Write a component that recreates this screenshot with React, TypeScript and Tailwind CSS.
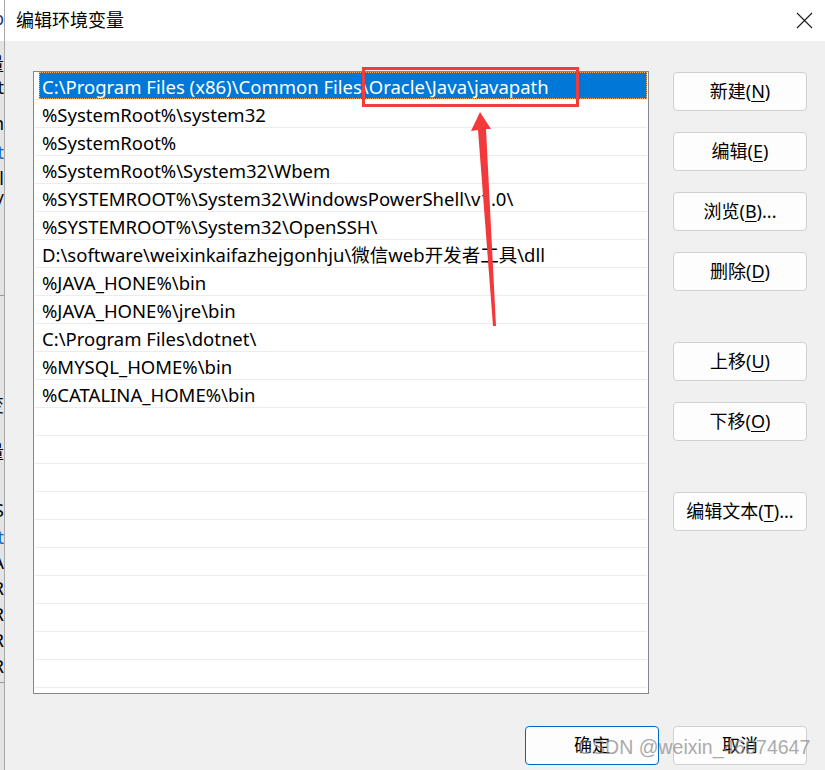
import React from "react";

const ui = { fontFamily: '"Noto Sans", "Noto Sans CJK SC", sans-serif' };

const paths = [
  "C:\\Program Files (x86)\\Common Files\\Oracle\\Java\\javapath",
  "%SystemRoot%\\system32",
  "%SystemRoot%",
  "%SystemRoot%\\System32\\Wbem",
  "%SYSTEMROOT%\\System32\\WindowsPowerShell\\v1.0\\",
  "%SYSTEMROOT%\\System32\\OpenSSH\\",
  "D:\\software\\weixinkaifazhejgonhju\\微信web开发者工具\\dll",
  "%JAVA_HONE%\\bin",
  "%JAVA_HONE%\\jre\\bin",
  "C:\\Program Files\\dotnet\\",
  "%MYSQL_HOME%\\bin",
  "%CATALINA_HOME%\\bin",
];

const rows = [...paths, ...Array(22 - paths.length).fill("")];

// bits of the window behind the dialog
const behind: [number, string, string][] = [
  [8, "p", "text-[#1f3a8a]"],
  [54, "量", "text-black"],
  [77, "t", "text-black"],
  [113, "n", "text-black"],
  [142, "t", "text-[#1565c0]"],
  [168, "l", "text-black"],
  [190, "/", "text-black"],
  [395, "变", "text-black"],
  [442, "量", "text-black"],
  [500, "S", "text-black"],
  [527, "t", "text-[#1565c0]"],
  [552, "A", "text-black"],
  [578, "R", "text-black"],
  [604, "R", "text-black"],
  [630, "R", "text-black"],
  [656, "R", "text-black"],
];

function Btn({ label, hot, rest = ")", tail = "", def = false }: { label: string; hot: string; rest?: string; tail?: string; def?: boolean }) {
  return (
    <button
      className={`w-[134px] h-[39px] shrink-0 rounded-[4px] bg-[#fdfdfd] border text-[18px] text-black flex items-center justify-center ${
        def ? "border-[#0067c0]" : "border-[#d0d0d0]"
      }`}
      style={ui}
    >
      {label}
      {hot && (
        <>
          (<span className="underline underline-offset-[3px]">{hot}</span>
          {rest}
        </>
      )}
      {tail}
    </button>
  );
}

export default function App() {
  return (
    <div className="relative w-[825px] h-[770px] flex overflow-hidden bg-white" style={ui}>
      {/* window behind */}
      <div className="relative w-[5px] shrink-0 overflow-hidden bg-[#e4e4e4] border-r border-[#a8a8a8]">
        <div className="h-[41px] bg-white" />
        <div className="h-px bg-[#9a9a9a] mt-[254px]" />
        <div className="h-px bg-[#9a9a9a] mt-[386px]" />
        {behind.map(([top, ch, color], i) => (
          <span key={i} className={`absolute right-0 text-[18px] leading-[20px] ${color}`} style={{ top }}>
            {ch}
          </span>
        ))}
      </div>

      {/* dialog */}
      <div className="flex-1 flex flex-col bg-[#f0f0f0]">
        <div className="h-[41px] shrink-0 bg-white flex items-center justify-between pl-[11px] pr-[11px]">
          <span className="text-[18px] text-black">编辑环境变量</span>
          <svg width="17" height="17" viewBox="0 0 17 17" className="mr-[1px]">
            <path d="M1 1 L16 16 M16 1 L1 16" stroke="#1a1a1a" strokeWidth="1.1" />
          </svg>
        </div>

        <div className="flex pt-[30px]">
          <div className="ml-[28px] w-[616px] h-[623px] border border-[#828790] bg-white px-px">
            {rows.map((p, i) => (
              <div key={i} className="h-[28px] border-b border-[#ececec]">
                {i === 0 ? (
                  <div className="ml-[4px] h-[27px] bg-[#0078d7] text-white border border-dotted border-[#f4b060] flex items-center pl-[2px] pt-[2px] whitespace-nowrap text-[18.5px]">
                    {p}
                  </div>
                ) : (
                  <div className="h-[27px] flex items-center pl-[7px] pt-[2px] whitespace-nowrap text-[18.5px] text-black">{p}</div>
                )}
              </div>
            ))}
          </div>

          <div className="ml-[24px] pt-[1px] flex flex-col">
            <Btn label="新建" hot="N" />
            <div className="h-[21px]" />
            <Btn label="编辑" hot="E" />
            <div className="h-[21px]" />
            <Btn label="浏览" hot="B" tail="..." />
            <div className="h-[21px]" />
            <Btn label="删除" hot="D" />
            <div className="h-[51px]" />
            <Btn label="上移" hot="U" />
            <div className="h-[21px]" />
            <Btn label="下移" hot="O" />
            <div className="h-[51px]" />
            <Btn label="编辑文本" hot="T" tail="..." />
          </div>
        </div>

        <div className="flex justify-end gap-[14px] pr-[18px] pt-[32px]">
          <Btn label="确定" hot="" def />
          <Btn label="取消" hot="" />
        </div>
      </div>

      {/* annotation */}
      <div className="absolute left-[362px] top-[67px] w-[217px] h-[40px] border-[3px] border-[#f23d3d]" />
      <svg className="absolute left-0 top-0" width="825" height="770" viewBox="0 0 825 770">
        <polygon points="480,112 471,131 478,130 493,326 496,326 486,129 491,129" fill="#f2393b" />
      </svg>

      {/* watermark */}
      <span
        className="absolute left-[578px] top-[734px] text-[19.5px] leading-[26px] text-[#888] opacity-70 whitespace-nowrap"
        style={{ fontFamily: '"Liberation Sans", Arial, sans-serif' }}
      >
        CSDN @weixin_46074647
      </span>
    </div>
  );
}
